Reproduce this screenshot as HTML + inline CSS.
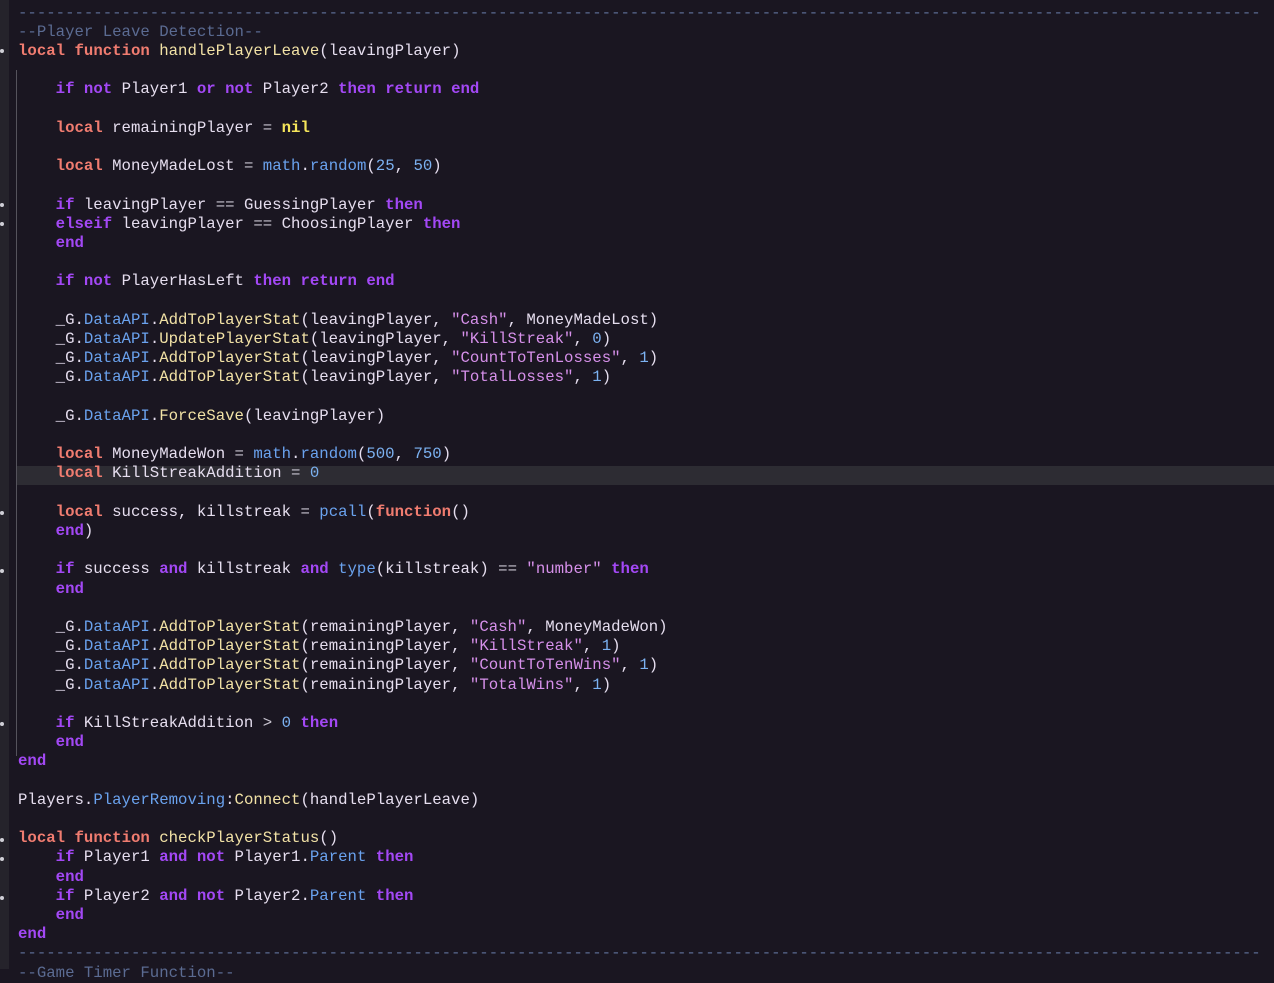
<!DOCTYPE html>
<html><head><meta charset="utf-8"><style>
html,body{margin:0;padding:0;width:1274px;height:969px;overflow:hidden;background:#1a1621;}
#g{position:absolute;left:0;top:0;width:9px;height:969px;background:#25232b;}
#w{position:absolute;left:0;top:2.5px;width:1274px;height:969px;}
#guide{position:absolute;left:16px;top:67px;width:1px;height:686px;background:#55535c;}
#hl{position:absolute;left:17px;top:463.8px;width:1257px;height:19.2px;background:#2d2c33;}
.r{position:absolute;left:18px;height:19.2px;line-height:19.2px;font-family:"Liberation Mono",monospace;font-size:15.7px;color:#e6deef;white-space:pre;}
.k{color:#f07c70;font-weight:bold}
.p{color:#a348f5;font-weight:bold}
.m{color:#6aa2ee}
.f{color:#f2e2a6}
.s{color:#d690ea}
.n{color:#7cb2f2}
.c{color:#5b6b92}
.y{color:#f5e55a;font-weight:bold}
.o{color:#c8c4d0}
.mk{position:absolute;left:0;width:4px;height:4px;border-radius:2px;background:#cfcfd6;}
</style></head><body>
<div id="g"></div>
<div id="w">
<div id="hl"></div>
<div id="guide"></div>
<div class="mk" style="top:46px"></div>
<div class="mk" style="top:200px"></div>
<div class="mk" style="top:219px"></div>
<div class="mk" style="top:508px"></div>
<div class="mk" style="top:566px"></div>
<div class="mk" style="top:719px"></div>
<div class="mk" style="top:835px"></div>
<div class="mk" style="top:854px"></div>
<div class="mk" style="top:893px"></div>

<div class="r c" style="top:1px">------------------------------------------------------------------------------------------------------------------------------------</div>
<div class="r c" style="top:20.2px">--Player Leave Detection--</div>
<div class="r" style="top:39.4px"><span class="k">local</span> <span class="k">function</span> <span class="f">handlePlayerLeave</span>(leavingPlayer)</div>
<div class="r" style="top:77.8px">    <span class="p">if</span> <span class="p">not</span> Player1 <span class="p">or</span> <span class="p">not</span> Player2 <span class="p">then</span> <span class="p">return</span> <span class="p">end</span></div>
<div class="r" style="top:116.2px">    <span class="k">local</span> remainingPlayer <span class="o">=</span> <span class="y">nil</span></div>
<div class="r" style="top:154.6px">    <span class="k">local</span> MoneyMadeLost <span class="o">=</span> <span class="m">math</span>.<span class="m">random</span>(<span class="n">25</span>, <span class="n">50</span>)</div>
<div class="r" style="top:193px">    <span class="p">if</span> leavingPlayer <span class="o">==</span> GuessingPlayer <span class="p">then</span></div>
<div class="r" style="top:212.2px">    <span class="p">elseif</span> leavingPlayer <span class="o">==</span> ChoosingPlayer <span class="p">then</span></div>
<div class="r" style="top:231.4px">    <span class="p">end</span></div>
<div class="r" style="top:269.8px">    <span class="p">if</span> <span class="p">not</span> PlayerHasLeft <span class="p">then</span> <span class="p">return</span> <span class="p">end</span></div>
<div class="r" style="top:308.2px">    _G.<span class="m">DataAPI</span>.<span class="f">AddToPlayerStat</span>(leavingPlayer, <span class="s">"Cash"</span>, MoneyMadeLost)</div>
<div class="r" style="top:327.4px">    _G.<span class="m">DataAPI</span>.<span class="f">UpdatePlayerStat</span>(leavingPlayer, <span class="s">"KillStreak"</span>, <span class="n">0</span>)</div>
<div class="r" style="top:346.6px">    _G.<span class="m">DataAPI</span>.<span class="f">AddToPlayerStat</span>(leavingPlayer, <span class="s">"CountToTenLosses"</span>, <span class="n">1</span>)</div>
<div class="r" style="top:365.8px">    _G.<span class="m">DataAPI</span>.<span class="f">AddToPlayerStat</span>(leavingPlayer, <span class="s">"TotalLosses"</span>, <span class="n">1</span>)</div>
<div class="r" style="top:404.2px">    _G.<span class="m">DataAPI</span>.<span class="f">ForceSave</span>(leavingPlayer)</div>
<div class="r" style="top:442.6px">    <span class="k">local</span> MoneyMadeWon <span class="o">=</span> <span class="m">math</span>.<span class="m">random</span>(<span class="n">500</span>, <span class="n">750</span>)</div>
<div class="r" style="top:461.8px">    <span class="k">local</span> KillStreakAddition <span class="o">=</span> <span class="n">0</span></div>
<div class="r" style="top:500.2px">    <span class="k">local</span> success, killstreak <span class="o">=</span> <span class="m">pcall</span>(<span class="k">function</span>()</div>
<div class="r" style="top:519.4px">    <span class="p">end</span>)</div>
<div class="r" style="top:557.8px">    <span class="p">if</span> success <span class="p">and</span> killstreak <span class="p">and</span> <span class="m">type</span>(killstreak) <span class="o">==</span> <span class="s">"number"</span> <span class="p">then</span></div>
<div class="r" style="top:577px">    <span class="p">end</span></div>
<div class="r" style="top:615.4px">    _G.<span class="m">DataAPI</span>.<span class="f">AddToPlayerStat</span>(remainingPlayer, <span class="s">"Cash"</span>, MoneyMadeWon)</div>
<div class="r" style="top:634.6px">    _G.<span class="m">DataAPI</span>.<span class="f">AddToPlayerStat</span>(remainingPlayer, <span class="s">"KillStreak"</span>, <span class="n">1</span>)</div>
<div class="r" style="top:653.8px">    _G.<span class="m">DataAPI</span>.<span class="f">AddToPlayerStat</span>(remainingPlayer, <span class="s">"CountToTenWins"</span>, <span class="n">1</span>)</div>
<div class="r" style="top:673px">    _G.<span class="m">DataAPI</span>.<span class="f">AddToPlayerStat</span>(remainingPlayer, <span class="s">"TotalWins"</span>, <span class="n">1</span>)</div>
<div class="r" style="top:711.4px">    <span class="p">if</span> KillStreakAddition <span class="o">&gt;</span> <span class="n">0</span> <span class="p">then</span></div>
<div class="r" style="top:730.6px">    <span class="p">end</span></div>
<div class="r" style="top:749.8px"><span class="p">end</span></div>
<div class="r" style="top:788.2px">Players.<span class="m">PlayerRemoving</span>:<span class="f">Connect</span>(handlePlayerLeave)</div>
<div class="r" style="top:826.6px"><span class="k">local</span> <span class="k">function</span> <span class="f">checkPlayerStatus</span>()</div>
<div class="r" style="top:845.8px">    <span class="p">if</span> Player1 <span class="p">and</span> <span class="p">not</span> Player1.<span class="m">Parent</span> <span class="p">then</span></div>
<div class="r" style="top:865px">    <span class="p">end</span></div>
<div class="r" style="top:884.2px">    <span class="p">if</span> Player2 <span class="p">and</span> <span class="p">not</span> Player2.<span class="m">Parent</span> <span class="p">then</span></div>
<div class="r" style="top:903.4px">    <span class="p">end</span></div>
<div class="r" style="top:922.6px"><span class="p">end</span></div>
<div class="r c" style="top:941.8px">------------------------------------------------------------------------------------------------------------------------------------</div>
<div class="r c" style="top:961px">--Game Timer Function--</div>
</div>
</body></html>
